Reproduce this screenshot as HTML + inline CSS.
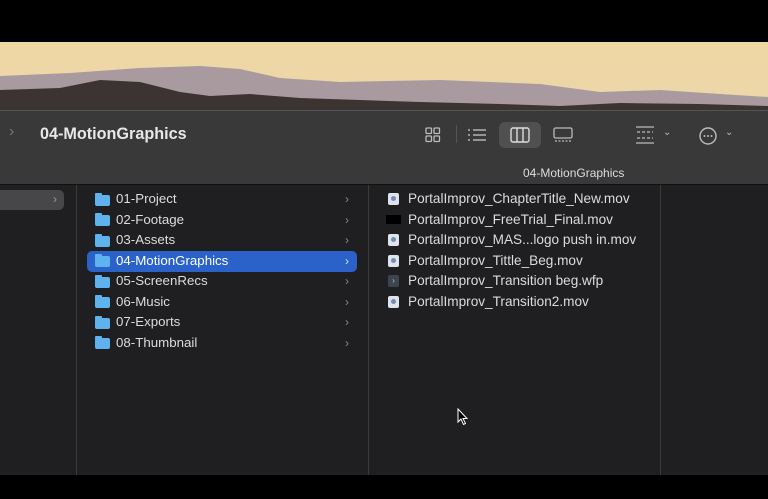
<!DOCTYPE html><html><head><style>
body{margin:0;width:768px;height:499px;background:#000;position:relative;overflow:hidden;font-family:"Liberation Sans",sans-serif;}
.wall{position:absolute;left:0;top:42px;width:768px;height:68px;background:linear-gradient(#efd7a4,#ecd6a8);overflow:hidden}
.tb{position:absolute;left:0;top:110px;width:768px;height:74px;background:#393939;border-top:1px solid #555}
.cols{position:absolute;left:0;top:184px;width:768px;height:290px;background:#1f1f21;border-top:1px solid #111}
.div{position:absolute;top:0;width:1px;height:290px;background:#3a3a3a}
.row{position:absolute;height:20px;line-height:20px;font-size:13.3px;color:#dcdcdc}
.fold{position:absolute;left:95px;width:15px;height:11px;background:#5eb2ee;border-radius:2px}
.fold:before{content:"";position:absolute;left:0;top:-2px;width:7px;height:3px;background:#5eb2ee;border-radius:1px 1px 0 0}
.chev{position:absolute;left:345px;color:#888;font-size:12px}
.doc{position:absolute;left:388px;width:11px;height:12px;background:#dfe4ea;border-radius:2px}
.doc:after{content:"";position:absolute;left:3px;top:3px;width:5px;height:5px;background:#6f8fb8;border-radius:50%}
.f2{font-size:13.6px}
</style></head><body>
<div class="wall"><svg width="768" height="68" style="position:absolute;left:0;top:0">
<path d="M0 34 L70 31 L140 26 L200 24 L240 27 L280 36 L340 40 L440 38 L540 42 L600 50 L660 48 L720 52 L768 55 L768 68 L0 68Z" fill="#a89a9f"/>
<path d="M0 48 L60 46 L100 38 L140 40 L180 50 L210 54 L250 52 L300 56 L360 58 L420 60 L500 62 L560 64 L620 61 L700 62 L768 64 L768 68 L0 68Z" fill="#3c3333"/>
</svg></div>
<div class="tb">
<div style="position:absolute;left:9px;top:12px;color:#777;font-size:16px">&#8250;</div>
<div style="position:absolute;left:40px;top:14px;color:#e8e8e8;font-size:16.2px;font-weight:bold">04-MotionGraphics</div>
<svg style="position:absolute;left:425px;top:16px" width="16" height="16"><g fill="none" stroke="#bbb" stroke-width="1.3"><rect x="1" y="1" width="5.5" height="5.5" rx="1"/><rect x="9" y="1" width="5.5" height="5.5" rx="1"/><rect x="1" y="9" width="5.5" height="5.5" rx="1"/><rect x="9" y="9" width="5.5" height="5.5" rx="1"/></g></svg>
<div style="position:absolute;left:456px;top:14px;width:1px;height:18px;background:#555"></div>
<svg style="position:absolute;left:467px;top:16px" width="20" height="16"><g stroke="#bbb" stroke-width="1.4"><line x1="6" y1="3" x2="19" y2="3"/><line x1="6" y1="8" x2="19" y2="8"/><line x1="6" y1="13" x2="19" y2="13"/><line x1="1" y1="3" x2="3" y2="3"/><line x1="1" y1="8" x2="3" y2="8"/><line x1="1" y1="13" x2="3" y2="13"/></g></svg>
<div style="position:absolute;left:499px;top:11px;width:42px;height:26px;background:#505050;border-radius:6px"></div>
<svg style="position:absolute;left:510px;top:16px" width="20" height="16"><g fill="none" stroke="#ddd" stroke-width="1.4"><rect x="1" y="1" width="18" height="14" rx="2"/><line x1="7" y1="1" x2="7" y2="15"/><line x1="13" y1="1" x2="13" y2="15"/></g></svg>
<svg style="position:absolute;left:553px;top:16px" width="20" height="16"><g fill="none" stroke="#bbb" stroke-width="1.3"><rect x="1" y="1" width="18" height="10" rx="1.5"/><line x1="2" y1="14" x2="19" y2="14" stroke-dasharray="2 1.5"/></g></svg>
<svg style="position:absolute;left:635px;top:15px" width="20" height="18"><g stroke="#bbb" stroke-width="1.2" fill="none"><line x1="1" y1="1" x2="19" y2="1"/><line x1="1" y1="17" x2="19" y2="17"/><line x1="2" y1="6" x2="18" y2="6" stroke-dasharray="3 2"/><line x1="2" y1="12" x2="18" y2="12" stroke-dasharray="3 2"/></g></svg>
<div style="position:absolute;left:663px;top:16px;color:#bbb;font-size:10px">&#8964;</div>
<svg style="position:absolute;left:698px;top:15px" width="20" height="20"><circle cx="10" cy="10" r="8" fill="none" stroke="#bbb" stroke-width="1.4"/><circle cx="6.5" cy="10" r="1" fill="#bbb"/><circle cx="10" cy="10" r="1" fill="#bbb"/><circle cx="13.5" cy="10" r="1" fill="#bbb"/></svg>
<div style="position:absolute;left:725px;top:16px;color:#bbb;font-size:10px">&#8964;</div>
<div style="position:absolute;left:523px;top:55px;color:#ddd;font-size:12px">04-MotionGraphics</div>
</div>
<div class="cols">
<div class="div" style="left:76px"></div><div class="div" style="left:368px"></div><div class="div" style="left:660px"></div>
<div style="position:absolute;left:0;top:5px;width:64px;height:20px;background:#47474a;border-radius:0 5px 5px 0"></div>
<div style="position:absolute;left:53px;top:7px;color:#999;font-size:12px">&#8250;</div>
<div style="position:absolute;left:87px;top:66px;width:270px;height:21px;background:#2a62c9;border-radius:5px"></div>
</div>
<div style="position:absolute;left:0;top:189px;width:768px">
<div class="fold" style="top:6px"></div><div class="row" style="left:116px;top:0">01-Project</div><div class="chev" style="top:3px">&#8250;</div>
<div class="fold" style="top:26px"></div><div class="row" style="left:116px;top:21px">02-Footage</div><div class="chev" style="top:24px">&#8250;</div>
<div class="fold" style="top:47px"></div><div class="row" style="left:116px;top:41px">03-Assets</div><div class="chev" style="top:44px">&#8250;</div>
<div class="fold" style="top:67px"></div><div class="row" style="left:116px;top:62px;color:#fff">04-MotionGraphics</div><div class="chev" style="top:65px;color:#ddd">&#8250;</div>
<div class="fold" style="top:88px"></div><div class="row" style="left:116px;top:82px">05-ScreenRecs</div><div class="chev" style="top:85px">&#8250;</div>
<div class="fold" style="top:108px"></div><div class="row" style="left:116px;top:103px">06-Music</div><div class="chev" style="top:106px">&#8250;</div>
<div class="fold" style="top:129px"></div><div class="row" style="left:116px;top:123px">07-Exports</div><div class="chev" style="top:126px">&#8250;</div>
<div class="fold" style="top:149px"></div><div class="row" style="left:116px;top:144px">08-Thumbnail</div><div class="chev" style="top:147px">&#8250;</div>
<div class="doc" style="top:4px"></div><div class="row f2" style="left:408px;top:0">PortalImprov_ChapterTitle_New.mov</div>
<div style="position:absolute;left:386px;top:26px;width:15px;height:9px;background:#000"></div><div class="row f2" style="left:408px;top:21px">PortalImprov_FreeTrial_Final.mov</div>
<div class="doc" style="top:45px"></div><div class="row f2" style="left:408px;top:41px">PortalImprov_MAS...logo push in.mov</div>
<div class="doc" style="top:66px"></div><div class="row f2" style="left:408px;top:62px">PortalImprov_Tittle_Beg.mov</div>
<div style="position:absolute;left:388px;top:86px;width:11px;height:12px;background:#3d4450;border-radius:2px;color:#9cf;font-size:8px;text-align:center;line-height:12px">&#8250;</div><div class="row f2" style="left:408px;top:82px">PortalImprov_Transition beg.wfp</div>
<div class="doc" style="top:107px"></div><div class="row f2" style="left:408px;top:103px">PortalImprov_Transition2.mov</div>
</div>
<svg style="position:absolute;left:457px;top:408px" width="12" height="18"><path d="M1 1 L1 14 L4 11 L6.5 16.5 L8.5 15.5 L6 10.5 L10 10.5Z" fill="#000" stroke="#fff" stroke-width="1"/></svg>
</body></html>
